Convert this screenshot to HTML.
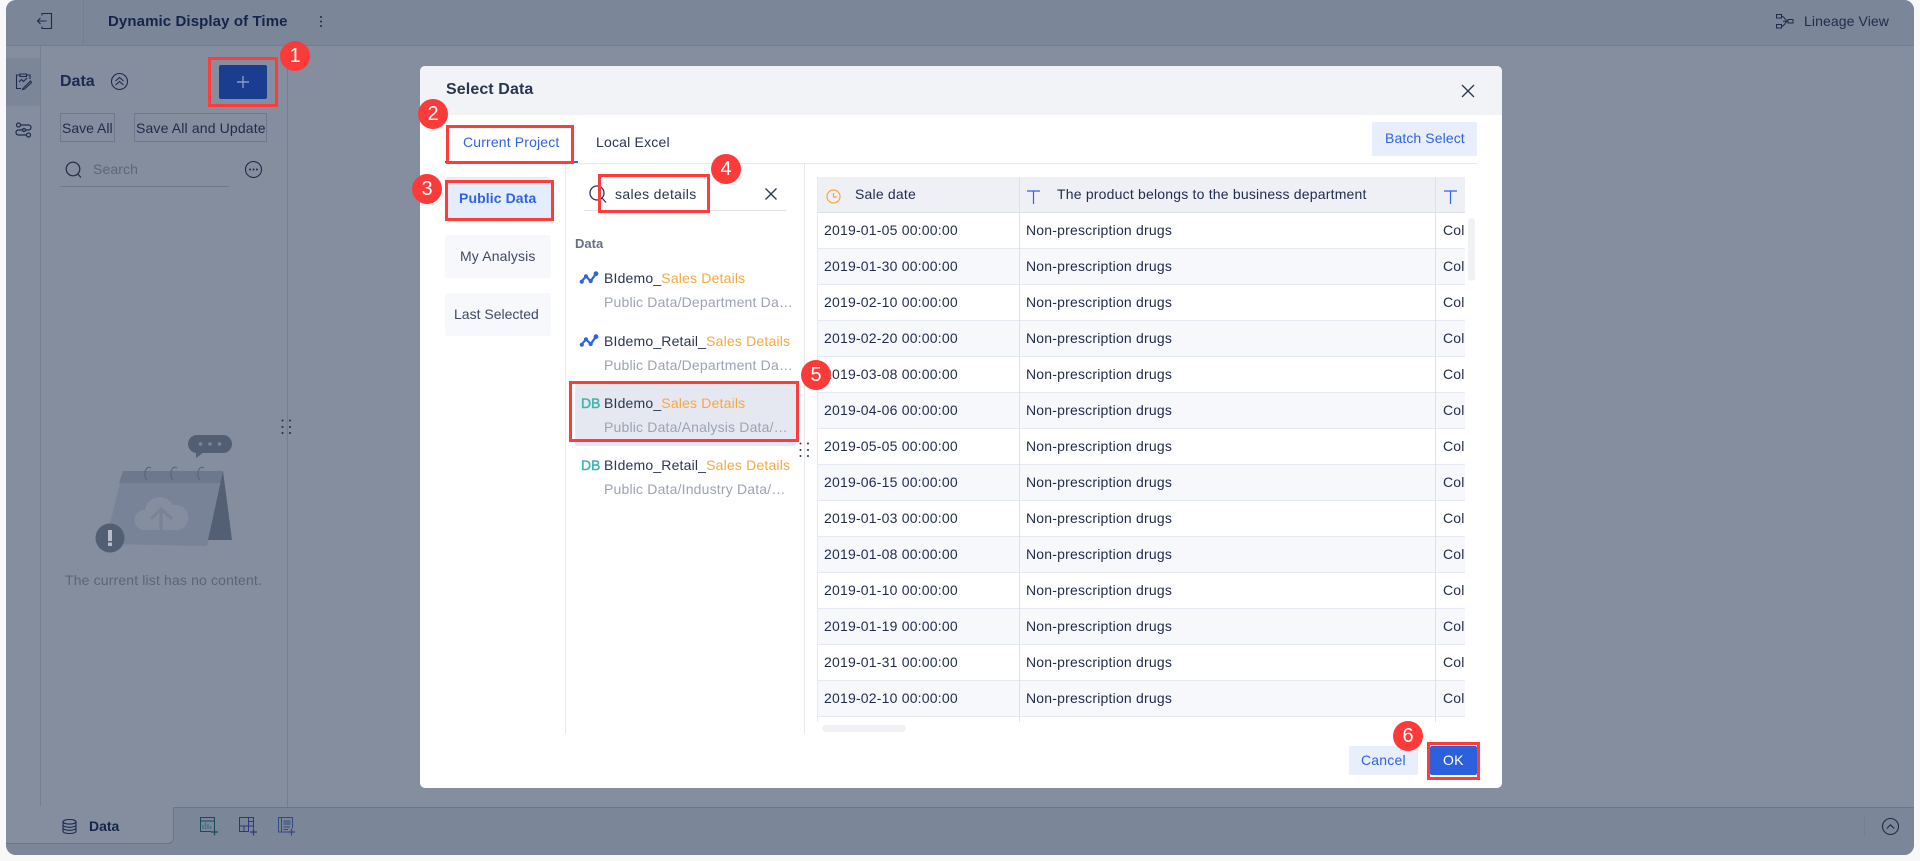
<!DOCTYPE html>
<html lang="en"><head><meta charset="utf-8"><title>Select Data</title>
<style>
*{box-sizing:border-box}
html,body{margin:0;padding:0;width:1920px;height:861px;overflow:hidden;background:#f8f8f8;font-family:"Liberation Sans",Arial,sans-serif}
.a{position:absolute}
.t{position:absolute;white-space:nowrap;line-height:20px;height:20px}
svg{position:absolute;overflow:visible}
.red{position:absolute;border:3px solid #ff3b3b}
.num{position:absolute;width:30px;height:30px;border-radius:50%;background:#fb3a3a;color:#fff;font-size:20px;line-height:30px;text-align:center}
.tc{position:absolute;white-space:nowrap;font-size:14px;letter-spacing:.2px;color:#1f2b4a;line-height:20px}
.it{letter-spacing:.18px}
.db{font-size:14px;letter-spacing:-.1px;-webkit-text-stroke:.45px #3db5ad;color:#3db5ad}
</style></head><body>
<div class="a" style="left:6px;top:0;width:1908px;height:855px;background:#858e9e;border-radius:10px;overflow:hidden"></div>
<div class="a" style="left:6px;top:0;width:1908px;height:46px;background:#7c8699;border-bottom:1px solid #747e91;border-radius:10px 10px 0 0"></div>
<div class="a" style="left:83px;top:0;width:1px;height:45px;background:#747e91"></div>
<svg style="left:36px;top:12px" width="18" height="18" viewBox="0 0 18 18" fill="none" stroke="#1f2b4a" stroke-width="1.1"><path d="M6 3.5V1.5H15.5V16.5H6V14.5M10.5 9H1.5M4.5 6L1.5 9L4.5 12"/></svg>
<div class="t" style="left:108px;top:12px;font-size:15px;font-weight:bold;color:#14244a;letter-spacing:.1px">Dynamic Display of Time</div>
<svg style="left:319px;top:15px" width="4" height="12"><g fill="#1f2b4a"><circle cx="2" cy="2" r="1"/><circle cx="2" cy="6.5" r="1"/><circle cx="2" cy="11" r="1"/></g></svg>
<svg style="left:1776px;top:14px" width="18" height="15" viewBox="0 0 18 15" fill="none" stroke="#1f2b4a" stroke-width="1"><rect x=".5" y=".5" width="5" height="3.5"/><rect x=".5" y="10.5" width="5" height="3.5"/><rect x="12" y="5.5" width="5" height="3.5"/><path d="M5.5 2.2C9 2.2 9 7.2 12 7.2M5.5 12.2C9 12.2 9 7.2 12 7.2M7 7.2H12"/></svg>
<div class="t" style="left:1804px;top:11px;font-size:14px;color:#1f2b4a;letter-spacing:.1px">Lineage View</div>

<div class="a" style="left:6px;top:58px;width:34px;height:48px;background:#7c8699"></div>
<div class="a" style="left:40px;top:46px;width:1px;height:761px;background:#747e91"></div>
<div class="a" style="left:287px;top:46px;width:1px;height:761px;background:#747e91"></div>
<svg style="left:15px;top:73px" width="17" height="17" viewBox="0 0 17 17" fill="none" stroke="#1f2b4a" stroke-width="1.1"><path d="M5 2H1.500V15.500H6M12 2H15V6M5 1H11.500V3.500H5ZM4 9L6.500 6.500L8.500 8.500L12 5M8 15.500L15.500 8L16.500 9.500L9.500 16L7.500 16.500Z"/></svg>
<svg style="left:15px;top:122px" width="17" height="16" viewBox="0 0 17 16" fill="none" stroke="#1f2b4a" stroke-width="1.2"><circle cx="3.500" cy="3" r="2"/><circle cx="13.500" cy="13" r="2"/><circle cx="9" cy="8" r="1.500"/><path d="M5.500 3H13.500A2.500 2.500 0 0 1 13.500 8H10.500M7.500 8H3.500A2.500 2.500 0 0 0 3.500 13H11.500"/></svg>

<div class="t" style="left:60px;top:72px;font-size:16px;font-weight:bold;color:#1b2a52">Data</div>
<svg style="left:111px;top:73px" width="17" height="17" viewBox="0 0 17 17" fill="none" stroke="#1f2b4a" stroke-width="1.1"><circle cx="8.500" cy="8.500" r="8"/><path d="M4.500 8L8.500 4.500L12.500 8M4.500 12L8.500 8.500L12.500 12"/></svg>
<div class="a" style="left:219px;top:65px;width:48px;height:34px;background:#1a3d8f;border-radius:2px"></div>
<svg style="left:237px;top:76px" width="12" height="12"><path d="M6 0V12M0 6H12" stroke="#8a9ac0" stroke-width="1.4"/></svg>
<div class="a" style="left:60px;top:113px;width:55px;height:29px;border:1px solid #6f798d"></div>
<div class="t" style="left:62px;top:118px;font-size:14px;color:#1f2b4a">Save All</div>
<div class="a" style="left:134px;top:113px;width:133px;height:29px;border:1px solid #6f798d"></div>
<div class="t" style="left:136px;top:118px;font-size:14px;color:#1f2b4a;letter-spacing:.15px">Save All and Update</div>
<svg style="left:65px;top:161px" width="17" height="17" viewBox="0 0 17 17" fill="none" stroke="#1f2b4a" stroke-width="1.2"><circle cx="8" cy="8" r="6.800"/><path d="M12.800 13L16 16.500"/></svg>
<div class="t" style="left:93px;top:159px;font-size:14px;color:#5c667a;letter-spacing:.1px">Search</div>
<div class="a" style="left:60px;top:186px;width:169px;height:1px;background:#6f798d"></div>
<svg style="left:245px;top:161px" width="17" height="17" viewBox="0 0 17 17" fill="none" stroke="#1f2b4a" stroke-width="1.1"><circle cx="8.500" cy="8.500" r="8"/><g fill="#1f2b4a" stroke="none"><circle cx="5" cy="8.500" r="1"/><circle cx="8.500" cy="8.500" r="1"/><circle cx="12" cy="8.500" r="1"/></g></svg>
<svg style="left:281px;top:419px" width="11" height="16"><g fill="#1f2b4a"><circle cx="1.500" cy="1.500" r="1"/><circle cx="9" cy="1.500" r="1"/><circle cx="1.500" cy="8" r="1"/><circle cx="9" cy="8" r="1"/><circle cx="1.500" cy="14" r="1"/><circle cx="9" cy="14" r="1"/></g></svg>

<svg style="left:0;top:0" width="300" height="560" viewBox="0 0 300 560">
<path d="M123 471H222.500L207 546L105 544Z" fill="#788397"/>
<path d="M123 471H223L221 483H119Z" fill="#6d788c"/>
<path d="M223 471L232 540H208Z" fill="#535f73"/>
<g fill="none" stroke="#596579" stroke-width="1.100"><path d="M151 468A4 6.500 0 1 0 147 480M177 468A4 6.500 0 1 0 173 480M204 468A4 6.500 0 1 0 200 480"/></g>
<rect x="188" y="435" width="44" height="18" rx="9" fill="#525e72"/><path d="M196 451V458L204 452Z" fill="#525e72"/>
<g fill="#7c8699"><circle cx="200.500" cy="444" r="1.800"/><circle cx="210" cy="444" r="1.800"/><circle cx="219.500" cy="444" r="1.800"/></g>
<path d="M144 530A10 10 0 0 1 145 510A15 15 0 0 1 173 505A12.500 12.500 0 0 1 178 530Z" fill="#858e9e"/>
<path d="M161 530V509M151 519L161 509L172 519" fill="none" stroke="#788397" stroke-width="3"/>
<circle cx="110" cy="538" r="14.500" fill="#525e72"/>
<rect x="108" y="530" width="4" height="11" fill="#b6bcc8"/><rect x="108" y="542.500" width="4" height="3.500" fill="#b6bcc8"/>
</svg>
<div class="t" style="left:65px;top:570px;font-size:14px;color:#5b6579;letter-spacing:.15px">The current list has no content.</div>

<div class="a" style="left:6px;top:807px;width:1908px;height:48px;background:#7c8699;border-top:1px solid #6b7589;border-radius:0 0 10px 10px"></div>
<div class="a" style="left:6px;top:807px;width:168px;height:37px;background:#858e9e;border-right:1px solid #6b7589;border-bottom:1px solid #6b7589;border-radius:0 0 6px 0"></div>
<div class="a" style="left:6px;top:806px;width:167px;height:3px;background:#858e9e"></div>
<svg style="left:62px;top:819px" width="15" height="15" viewBox="0 0 15 15" fill="none" stroke="#1b2a52" stroke-width="1.100"><ellipse cx="7.500" cy="2.800" rx="6.500" ry="2.300"/><path d="M1 2.800V12.200C1 13.500 4 14.500 7.500 14.500S14 13.500 14 12.200V2.800M1 6C1 7.300 4 8.300 7.500 8.300S14 7.300 14 6M1 9C1 10.300 4 11.300 7.500 11.300S14 10.300 14 9"/></svg>
<div class="t" style="left:89px;top:816px;font-size:14px;font-weight:bold;color:#14244a">Data</div>
<svg style="left:200px;top:817px" width="19" height="19" viewBox="0 0 19 19" fill="none"><path d="M14.500 12V.5H.5V14.500H11M.5 4H14.500" stroke="#1a4a5a" stroke-width="1"/><path d="M3 12V8M5.500 12V5.500M8 12V7M10.500 12V9" stroke="#3f7a84" stroke-width="1.500"/><path d="M14.500 11.500V18.500M11 15H18" stroke="#1a4a5a" stroke-width="1.200"/></svg>
<svg style="left:239px;top:817px" width="19" height="19" viewBox="0 0 19 19" fill="none" stroke="#2c3685" stroke-width="1"><path d="M14.500 11V.5H.5V14.500H10M.5 9H14.500M9.500.5V14.500M9.500 4.500H14.500M5 9V14.500"/><path d="M14.500 11.500V18.500M11 15H18" stroke-width="1.200"/></svg>
<svg style="left:278px;top:817px" width="18" height="19" viewBox="0 0 18 19" fill="none" stroke="#2f4a87" stroke-width="1"><path d="M14.500 11V.5H.5V15H10M3.500.5V15"/><rect x="5.500" y="3" width="7" height="5" fill="#55678f" stroke="none"/><path d="M5.500 10H12M5.500 12.500H10"/><path d="M13.500 11.500V18.500M10 15H17" stroke-width="1.200"/></svg>
<div class="a" style="left:1864px;top:817px;width:1px;height:19px;background:#747e91"></div>
<svg style="left:1882px;top:818px" width="17" height="17" viewBox="0 0 17 17" fill="none" stroke="#1f2b4a" stroke-width="1.100"><circle cx="8.500" cy="8.500" r="8"/><path d="M4.800 10.500L8.500 6.800L12.200 10.500"/></svg>

<!-- modal -->
<div class="a" style="left:420px;top:66px;width:1082px;height:722px;background:#fff;border-radius:5px;overflow:hidden">
<div class="a" style="left:0;top:0;width:1082px;height:49px;background:#f2f3f7"></div>
</div>
<div class="t" style="left:446px;top:80px;font-size:16px;font-weight:bold;color:#2a3550;letter-spacing:.1px">Select Data</div>
<svg style="left:1461px;top:84px" width="14" height="14"><path d="M1 1L13 13M13 1L1 13" stroke="#2a3550" stroke-width="1.300"/></svg>
<div class="t" style="left:463px;top:132px;font-size:14px;color:#2f63e0;letter-spacing:.15px">Current Project</div>
<div class="t" style="left:596px;top:132px;font-size:14px;color:#2a3550;letter-spacing:.2px">Local Excel</div>
<div class="a" style="left:1372px;top:122px;width:105px;height:34px;background:#e8eefb;border-radius:2px"></div>
<div class="t" style="left:1385px;top:128px;font-size:14px;color:#2f63e0;letter-spacing:.1px">Batch Select</div>
<div class="a" style="left:445px;top:163px;width:1032px;height:1px;background:#e6e9f1"></div>
<div class="a" style="left:445px;top:161px;width:133px;height:2px;background:#2f63e0"></div>

<div class="a" style="left:445px;top:177px;width:106px;height:43px;background:#e5edfd;border-radius:3px"></div>
<div class="t" style="left:459px;top:188px;font-size:14px;font-weight:bold;color:#2f63e0;letter-spacing:.1px">Public Data</div>
<div class="a" style="left:445px;top:235px;width:106px;height:43px;background:#f7f8fc;border-radius:3px"></div>
<div class="t" style="left:460px;top:246px;font-size:14px;color:#3f4a63;letter-spacing:.15px">My Analysis</div>
<div class="a" style="left:445px;top:293px;width:106px;height:43px;background:#f7f8fc;border-radius:3px"></div>
<div class="t" style="left:454px;top:304px;font-size:14px;color:#3f4a63">Last Selected</div>
<div class="a" style="left:565px;top:164px;width:1px;height:570px;background:#e6e9f1"></div>
<div class="a" style="left:804px;top:164px;width:1px;height:570px;background:#e6e9f1"></div>

<svg style="left:589px;top:185px" width="18" height="18" viewBox="0 0 18 18" fill="none" stroke="#2a3550" stroke-width="1.300"><circle cx="8" cy="8" r="7"/><path d="M13 13L17 17.500"/></svg>
<div class="t" style="left:615px;top:184px;font-size:14px;color:#2a3550;letter-spacing:.35px">sales details</div>
<div class="a" style="left:584px;top:210px;width:202px;height:1px;background:#e0e3eb"></div>
<svg style="left:765px;top:188px" width="12" height="12"><path d="M0.500 0.500L11.500 11.500M11.500 .5L.5 11.500" stroke="#2a3550" stroke-width="1.300"/></svg>
<div class="t" style="left:575px;top:234px;font-size:13px;font-weight:bold;color:#667085">Data</div>

<div class="a" style="left:575px;top:384px;width:221px;height:62px;background:#e5e8f0;border-radius:2px"></div>
<svg style="left:580px;top:270px" width="18" height="15" viewBox="0 0 18 15" fill="none"><path d="M1.300 11.700L6 6.300L10.700 11L16 3.700" stroke="#2f63e0" stroke-width="2.200"/><g fill="#2f63e0"><circle cx="1.800" cy="11.700" r="2.100"/><circle cx="6" cy="6.300" r="2.100"/><circle cx="10.700" cy="11" r="2.100"/><circle cx="16" cy="3.700" r="2.400"/></g></svg>
<svg style="left:580px;top:333px" width="18" height="15" viewBox="0 0 18 15" fill="none"><path d="M1.300 11.700L6 6.300L10.700 11L16 3.700" stroke="#2f63e0" stroke-width="2.200"/><g fill="#2f63e0"><circle cx="1.800" cy="11.700" r="2.100"/><circle cx="6" cy="6.300" r="2.100"/><circle cx="10.700" cy="11" r="2.100"/><circle cx="16" cy="3.700" r="2.400"/></g></svg>
<div class="t db" style="left:581px;top:393px">DB</div>
<div class="t db" style="left:581px;top:455px">DB</div>

<div class="t it" style="left:604px;top:268px;font-size:14px;color:#2a3550">BIdemo_<span style="color:#f8a83c">Sales Details</span></div>
<div class="t it" style="left:604px;top:292px;font-size:14px;color:#9ca3b3">Public Data/Department Da…</div>
<div class="t it" style="left:604px;top:331px;font-size:14px;color:#2a3550">BIdemo_Retail_<span style="color:#f8a83c">Sales Details</span></div>
<div class="t it" style="left:604px;top:355px;font-size:14px;color:#9ca3b3">Public Data/Department Da…</div>
<div class="t it" style="left:604px;top:393px;font-size:14px;color:#2a3550">BIdemo_<span style="color:#f8a83c">Sales Details</span></div>
<div class="t it" style="left:604px;top:417px;font-size:14px;color:#9ca3b3">Public Data/Analysis Data/…</div>
<div class="t it" style="left:604px;top:455px;font-size:14px;color:#2a3550">BIdemo_Retail_<span style="color:#f8a83c">Sales Details</span></div>
<div class="t it" style="left:604px;top:479px;font-size:14px;color:#9ca3b3">Public Data/Industry Data/…</div>
<svg style="left:799px;top:442px" width="11" height="16"><g fill="#2a3550"><circle cx="1.500" cy="1.500" r="1"/><circle cx="9" cy="1.500" r="1"/><circle cx="1.500" cy="8" r="1"/><circle cx="9" cy="8" r="1"/><circle cx="1.500" cy="14" r="1"/><circle cx="9" cy="14" r="1"/></g></svg>

<!-- table -->
<div class="a" style="left:817px;top:177px;width:1px;height:545px;background:#e6e9f1"></div>
<div class="a" style="left:818px;top:177px;width:647px;height:545px;overflow:hidden">
<div class="a" style="left:0;top:0;width:647px;height:36px;background:#eef0f5;border-bottom:1px solid #dde1ea"></div>
<div class="a" style="left:0;top:36px;width:647px;height:36px;background:#fff;border-bottom:1px solid #e6e9f1"></div>
<div class="a" style="left:0;top:72px;width:647px;height:36px;background:#f7f8fc;border-bottom:1px solid #e6e9f1"></div>
<div class="a" style="left:0;top:108px;width:647px;height:36px;background:#fff;border-bottom:1px solid #e6e9f1"></div>
<div class="a" style="left:0;top:144px;width:647px;height:36px;background:#f7f8fc;border-bottom:1px solid #e6e9f1"></div>
<div class="a" style="left:0;top:180px;width:647px;height:36px;background:#fff;border-bottom:1px solid #e6e9f1"></div>
<div class="a" style="left:0;top:216px;width:647px;height:36px;background:#f7f8fc;border-bottom:1px solid #e6e9f1"></div>
<div class="a" style="left:0;top:252px;width:647px;height:36px;background:#fff;border-bottom:1px solid #e6e9f1"></div>
<div class="a" style="left:0;top:288px;width:647px;height:36px;background:#f7f8fc;border-bottom:1px solid #e6e9f1"></div>
<div class="a" style="left:0;top:324px;width:647px;height:36px;background:#fff;border-bottom:1px solid #e6e9f1"></div>
<div class="a" style="left:0;top:360px;width:647px;height:36px;background:#f7f8fc;border-bottom:1px solid #e6e9f1"></div>
<div class="a" style="left:0;top:396px;width:647px;height:36px;background:#fff;border-bottom:1px solid #e6e9f1"></div>
<div class="a" style="left:0;top:432px;width:647px;height:36px;background:#f7f8fc;border-bottom:1px solid #e6e9f1"></div>
<div class="a" style="left:0;top:468px;width:647px;height:36px;background:#fff;border-bottom:1px solid #e6e9f1"></div>
<div class="a" style="left:0;top:504px;width:647px;height:36px;background:#f7f8fc;border-bottom:1px solid #e6e9f1"></div>
<div class="a" style="left:201px;top:0;width:1px;height:545px;background:#dde1ea"></div>
<div class="a" style="left:617px;top:0;width:1px;height:545px;background:#dde1ea"></div>
<svg style="left:8px;top:12px" width="15" height="15" viewBox="0 0 15 15" fill="none" stroke="#f2a742" stroke-width="1.200"><circle cx="7.500" cy="7.500" r="6.500"/><path d="M7.500 4V8H11"/></svg>
<svg style="left:208px;top:12px" width="15" height="15" viewBox="0 0 15 15" fill="none" stroke="#2f63e0" stroke-width="1.200"><path d="M1 2H14M7.500 2V15"/></svg>
<svg style="left:625px;top:12px" width="15" height="15" viewBox="0 0 15 15" fill="none" stroke="#2f63e0" stroke-width="1.200"><path d="M1 2H14M7.500 2V15"/></svg>
<div class="tc" style="left:37px;top:7px">Sale date</div>
<div class="tc" style="left:239px;top:7px">The product belongs to the business department</div>
<div class="tc" style="left:6px;top:43px">2019-01-05 00:00:00</div><div class="tc" style="left:208px;top:43px">Non-prescription drugs</div><div class="tc" style="left:625px;top:43px">Cold</div>
<div class="tc" style="left:6px;top:79px">2019-01-30 00:00:00</div><div class="tc" style="left:208px;top:79px">Non-prescription drugs</div><div class="tc" style="left:625px;top:79px">Cold</div>
<div class="tc" style="left:6px;top:115px">2019-02-10 00:00:00</div><div class="tc" style="left:208px;top:115px">Non-prescription drugs</div><div class="tc" style="left:625px;top:115px">Cold</div>
<div class="tc" style="left:6px;top:151px">2019-02-20 00:00:00</div><div class="tc" style="left:208px;top:151px">Non-prescription drugs</div><div class="tc" style="left:625px;top:151px">Cold</div>
<div class="tc" style="left:6px;top:187px">2019-03-08 00:00:00</div><div class="tc" style="left:208px;top:187px">Non-prescription drugs</div><div class="tc" style="left:625px;top:187px">Cold</div>
<div class="tc" style="left:6px;top:223px">2019-04-06 00:00:00</div><div class="tc" style="left:208px;top:223px">Non-prescription drugs</div><div class="tc" style="left:625px;top:223px">Cold</div>
<div class="tc" style="left:6px;top:259px">2019-05-05 00:00:00</div><div class="tc" style="left:208px;top:259px">Non-prescription drugs</div><div class="tc" style="left:625px;top:259px">Cold</div>
<div class="tc" style="left:6px;top:295px">2019-06-15 00:00:00</div><div class="tc" style="left:208px;top:295px">Non-prescription drugs</div><div class="tc" style="left:625px;top:295px">Cold</div>
<div class="tc" style="left:6px;top:331px">2019-01-03 00:00:00</div><div class="tc" style="left:208px;top:331px">Non-prescription drugs</div><div class="tc" style="left:625px;top:331px">Cold</div>
<div class="tc" style="left:6px;top:367px">2019-01-08 00:00:00</div><div class="tc" style="left:208px;top:367px">Non-prescription drugs</div><div class="tc" style="left:625px;top:367px">Cold</div>
<div class="tc" style="left:6px;top:403px">2019-01-10 00:00:00</div><div class="tc" style="left:208px;top:403px">Non-prescription drugs</div><div class="tc" style="left:625px;top:403px">Cold</div>
<div class="tc" style="left:6px;top:439px">2019-01-19 00:00:00</div><div class="tc" style="left:208px;top:439px">Non-prescription drugs</div><div class="tc" style="left:625px;top:439px">Cold</div>
<div class="tc" style="left:6px;top:475px">2019-01-31 00:00:00</div><div class="tc" style="left:208px;top:475px">Non-prescription drugs</div><div class="tc" style="left:625px;top:475px">Cold</div>
<div class="tc" style="left:6px;top:511px">2019-02-10 00:00:00</div><div class="tc" style="left:208px;top:511px">Non-prescription drugs</div><div class="tc" style="left:625px;top:511px">Cold</div>
</div>
<div class="a" style="left:1468px;top:218px;width:7px;height:63px;background:#f0f1f4;border-radius:4px"></div>
<div class="a" style="left:822px;top:725px;width:84px;height:7px;background:#f0f1f4;border-radius:4px"></div>

<div class="a" style="left:1349px;top:746px;width:69px;height:29px;background:#e8eefb;border-radius:2px"></div>
<div class="t" style="left:1361px;top:750px;font-size:14px;color:#2f63e0;letter-spacing:.2px">Cancel</div>
<div class="a" style="left:1430px;top:746px;width:47px;height:29px;background:#2c60dd;border-radius:2px"></div>
<div class="t" style="left:1443px;top:750px;font-size:14px;color:#fff;letter-spacing:.2px">OK</div>

<!-- annotations -->
<div class="red" style="left:208px;top:57px;width:70px;height:50px"></div>
<div class="red" style="left:446px;top:125px;width:128px;height:39px"></div>
<div class="red" style="left:445px;top:180px;width:109px;height:41px"></div>
<div class="red" style="left:598px;top:174px;width:112px;height:39px"></div>
<div class="red" style="left:569px;top:381px;width:230px;height:61px"></div>
<div class="red" style="left:1427px;top:742px;width:53px;height:38px"></div>
<div class="num" style="left:280px;top:41px">1</div>
<div class="num" style="left:418px;top:99px">2</div>
<div class="num" style="left:412px;top:174px">3</div>
<div class="num" style="left:711px;top:154px">4</div>
<div class="num" style="left:801px;top:360px">5</div>
<div class="num" style="left:1393px;top:721px">6</div>
</body></html>
